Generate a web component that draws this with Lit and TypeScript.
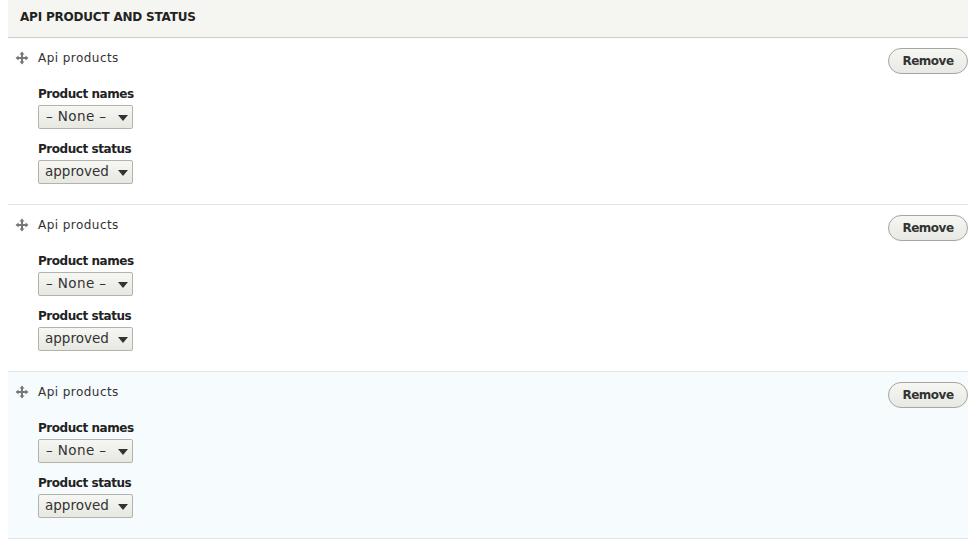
import { LitElement, html, css, svg } from "lit";
import { customElement } from "lit/decorators.js";

const arrows = svg`<path d="M7 0.5 L9.5 3.5 H8 V6 H10.5 V4.5 L13.5 7 L10.5 9.5 V8 H8 V10.5 H9.5 L7 13.5 L4.5 10.5 H6 V8 H3.5 V9.5 L0.5 7 L3.5 4.5 V6 H6 V3.5 H4.5 Z" fill="#777"/>`;

@customElement("app-root")
export class AppRoot extends LitElement {
  static styles = css`
    :host { display: block; font-family: "DejaVu Sans", Verdana, sans-serif; color: #333; background: #fff; height: 543px; overflow: hidden; }
    .wrap { padding: 0 12px 0 8px; }
    .head { height: 37px; box-sizing: border-box; background: #f5f5f2; padding: 10px 12px 0; font-size: 12px; font-weight: 700; line-height: 14px; color: #222; text-transform: uppercase; letter-spacing: -0.2px; }
    .headline { height: 1px; background: #ccc; }
    .row { height: 167px; box-sizing: border-box; border-bottom: 1px solid #e5e5e5; padding: 10px 0 0 7px; display: flex; justify-content: space-between; align-items: flex-start; }
    .row.hi { background: #f6fbfe; }
    .main { display: flex; flex-direction: column; }
    .title { display: flex; align-items: center; gap: 9px; height: 20px; font-size: 12px; color: #333; letter-spacing: 0.45px; }
    .title svg { width: 14px; height: 14px; display: block; margin-top: -1px; }
    .field { margin-left: 23px; display: flex; flex-direction: column; }
    .field.first { margin-top: 19px; }
    .field.second { margin-top: 13px; }
    label { font-size: 12px; font-weight: 700; line-height: 14px; color: #222; margin-bottom: 4px; letter-spacing: -0.45px; }
    .select { width: 95px; height: 24px; box-sizing: border-box; border: 1px solid #b3b3ab; border-radius: 2px; background: linear-gradient(#f6f6f3, #e8e8e2); display: flex; align-items: center; padding: 0 0 2px 6px; font-size: 13.5px; color: #333; position: relative; }
    .select.none { padding-left: 7px; letter-spacing: 0.4px; }
    .select::after { content: ""; position: absolute; right: 4px; top: 9px; border-left: 5px solid transparent; border-right: 5px solid transparent; border-top: 6px solid #333; }
    button { width: 80px; height: 26px; border: 1px solid #a6a6a0; border-radius: 13px; background: linear-gradient(#f6f6f3, #e8e8e4); font: 700 12px "DejaVu Sans", Verdana, sans-serif; letter-spacing: -0.5px; color: #333; padding: 0; }
  `;

  private row(hi: boolean) {
    return html`<div class="row ${hi ? "hi" : ""}">
      <div class="main">
        <div class="title"><svg viewBox="0 0 14 14">${arrows}</svg><span>Api products</span></div>
        <div class="field first"><label>Product names</label><div class="select none">– None –</div></div>
        <div class="field second"><label>Product status</label><div class="select">approved</div></div>
      </div>
      <button>Remove</button>
    </div>`;
  }

  render() {
    return html`<div class="wrap">
      <div class="head">API product and status</div>
      <div class="headline"></div>
      ${this.row(false)}${this.row(false)}${this.row(true)}
    </div>`;
  }
}
